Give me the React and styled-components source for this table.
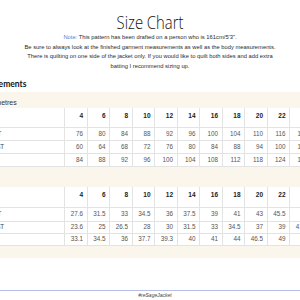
import React from "react";
import styled, { createGlobalStyle } from "styled-components";

const Global = createGlobalStyle`
  html, body { margin: 0; padding: 0; background: #ffffff; }
  body { overflow: hidden; font-family: "Liberation Sans", Arial, sans-serif; }
`;

const Viewport = styled.div`
  width: 300px;
  height: 300px;
  overflow: hidden;
  background: #ffffff;
`;

const Page = styled.div`
  width: 436px;
  margin-left: -68px;
  display: flex;
  flex-direction: column;
`;

const Title = styled.h1`
  margin: 12px 0 0;
  height: 21px;
  font-family: "Open Sans", sans-serif;
  font-weight: 300;
  font-size: 19px;
  line-height: 21px;
  color: #111;
  text-align: center;
  transform: scaleX(0.78);
`;

const Notes = styled.div`
  font-family: "Liberation Sans", Arial, sans-serif;
  font-size: 5.8px;
  line-height: 9.7px;
  color: #2a2a2a;
  text-align: center;
`;

const NoteLabel = styled.span`
  color: #4f7ee0;
`;

const Heading = styled.h2`
  margin: 6px 0 2px;
  padding-left: 3px;
  font-family: Lato, sans-serif;
  font-weight: 700;
  font-size: 8.5px;
  line-height: 12px;
  color: #111;
`;

const Band = styled.div`
  height: ${(p) => p.$h}px;
  background: #faf6eb;
  box-sizing: border-box;
  padding: ${(p) => p.$pt || 0}px 0 0 47px;
  font-family: "Liberation Sans", Arial, sans-serif;
  font-size: 7px;
  line-height: 10px;
  color: #333;
`;

const Table = styled.table`
  width: 379.5px;
  table-layout: fixed;
  border-collapse: collapse;
  font-family: "Liberation Sans", Arial, sans-serif;
`;

const LabelCol = styled.col`
  width: 132px;
`;
const NumCol = styled.col`
  width: 22.5px;
`;

const HeadCell = styled.th`
  height: 20px;
  box-sizing: border-box;
  padding: 3px 3.5px 0 0;
  vertical-align: top;
  text-align: right;
  font-size: 6.5px;
  line-height: 9px;
  font-weight: 700;
  color: #222;
  border: 1px solid #e3e3e3;
  border-top: none;
`;

const Cell = styled.td`
  height: ${(p) => p.$h}px;
  box-sizing: border-box;
  padding: 0 3.5px 0 0;
  text-align: right;
  font-size: 6.3px;
  line-height: 8px;
  color: #555;
  border: 1px solid #e3e3e3;
  white-space: nowrap;
`;

const LabelCell = styled(Cell)`
  text-align: left;
  padding: 0 0 0 51.5px;
  color: #444;
`;

const Spacer = styled.div`
  height: 32px;
`;

const Rule = styled.div`
  height: 1.5px;
  background: #b4c0e8;
`;

const Footer = styled.div`
  text-align: center;
  padding-left: 10px;
  font-family: "Liberation Sans", Arial, sans-serif;
  font-style: italic;
  font-size: 5px;
  line-height: 9px;
  color: #444;
`;

const sizes = [4, 6, 8, 10, 12, 14, 16, 18, 20, 22, 24];

const cm = [
  ["BUST", [76, 80, 84, 88, 92, 96, 100, 104, 110, 116, 122]],
  ["WAIST", [60, 64, 68, 72, 76, 80, 84, 88, 94, 100, 106]],
  ["HIP", [84, 88, 92, 96, 100, 104, 108, 112, 118, 124, 130]],
];

const inches = [
  ["BUST", [27.6, 31.5, 33, 34.5, 36, 37.5, 39, 41, 43, 45.5, 48]],
  ["WAIST", [23.6, 25, 26.5, 28, 30, 31.5, 33, 34.5, 37, 39, 41.5]],
  ["HIP", [33.1, 34.5, 36, 37.7, 39.3, 40, 41, 44, 46.5, 49, 51]],
];

function SizeTable({ rows, heights }) {
  return (
    <Table>
      <colgroup>
        <LabelCol />
        {sizes.map((s) => (
          <NumCol key={s} />
        ))}
      </colgroup>
      <thead>
        <tr>
          <HeadCell />
          {sizes.map((s) => (
            <HeadCell key={s}>{s}</HeadCell>
          ))}
        </tr>
      </thead>
      <tbody>
        {rows.map(([label, vals], i) => (
          <tr key={label}>
            <LabelCell $h={heights[i]}>{label}</LabelCell>
            {vals.map((v, j) => (
              <Cell key={j} $h={heights[i]}>
                {v}
              </Cell>
            ))}
          </tr>
        ))}
      </tbody>
    </Table>
  );
}

export default function App() {
  return (
    <Viewport>
      <Global />
      <Page>
        <Title>Size Chart</Title>
        <Notes>
          <NoteLabel>Note:</NoteLabel> This pattern has been drafted on a person who is 161cm/5'3".
          <br />
          Be sure to always look at the finished garment measurements as well as the body measurements.
          <br />
          There is quilting on one side of the jacket only. If you would like to quilt both sides and add extra
          <br />
          batting I recommend sizing up.
        </Notes>
        <Heading>Garment Measurements</Heading>
        <Band $h={16} $pt={6}>Centimetres</Band>
        <SizeTable rows={cm} heights={[13, 12.5, 13.5]} />
        <Band $h={20} $pt={6}>Inches</Band>
        <SizeTable rows={inches} heights={[14, 12, 12]} />
        <Band $h={12} />
        <Spacer />
        <Rule />
        <Footer>#reSageJacket</Footer>
      </Page>
    </Viewport>
  );
}
